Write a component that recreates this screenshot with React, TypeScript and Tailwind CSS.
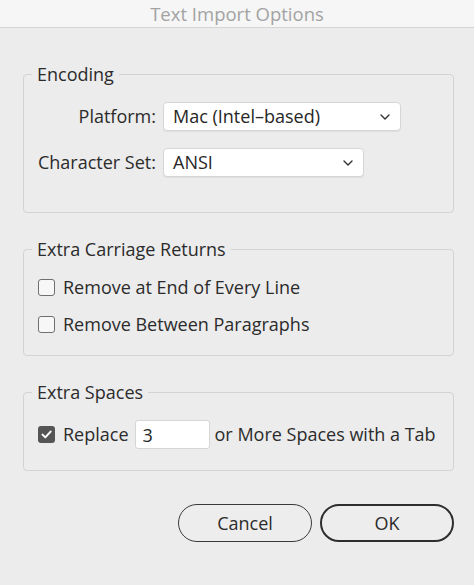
import { useState } from "react";

const FONT = "font-['Open_Sans',_'Noto_Sans',_sans-serif]";

const Chevron = () => (
  <svg width="10" height="6" viewBox="0 0 10 6" fill="none" className="shrink-0">
    <path d="M1 1l4 4 4-4" stroke="#333" strokeWidth="1.4" strokeLinecap="round" strokeLinejoin="round" />
  </svg>
);

const Select = ({ value, width }: { value: string; width: string }) => (
  <div
    className={`${width} flex h-[29px] items-center justify-between rounded-[4px] border border-[#d6d6d6] bg-white pl-[9px] pr-[10px] shadow-[0_1px_1px_rgba(0,0,0,0.06)]`}
  >
    <span className="text-[18px] text-[#262626]">{value}</span>
    <Chevron />
  </div>
);

const Checkbox = ({ checked, onChange }: { checked: boolean; onChange: () => void }) => (
  <button
    type="button"
    onClick={onChange}
    className={
      checked
        ? "flex h-[17px] w-[17px] shrink-0 items-center justify-center rounded-[3px] bg-[#555]"
        : "h-[17px] w-[17px] shrink-0 rounded-[3px] border border-[#6f6f6f] bg-[#f7f7f7]"
    }
  >
    {checked ? (
      <svg width="11" height="9" viewBox="0 0 11 9" fill="none">
        <path d="M1.5 4.6l2.8 2.8L9.6 1.6" stroke="#fff" strokeWidth="2" strokeLinecap="round" strokeLinejoin="round" />
      </svg>
    ) : null}
  </button>
);

const Group = ({ title, className, children }: { title: string; className: string; children: React.ReactNode }) => (
  <fieldset className={`mx-[20px] ml-[23px] rounded-[4px] border border-[#d3d3d3] ${className}`}>
    <legend className="ml-[8px] px-[5px] text-[18px] leading-[22px] text-[#2b2b2b]">{title}</legend>
    {children}
  </fieldset>
);

export default function App() {
  const [endOfLine, setEndOfLine] = useState(false);
  const [betweenParagraphs, setBetweenParagraphs] = useState(false);
  const [replace, setReplace] = useState(true);

  return (
    <div className={`${FONT} flex h-[585px] w-[474px] flex-col bg-[#ececec] text-[#2b2b2b]`}>
      <div className="flex h-[28px] shrink-0 items-center justify-center border-b border-[#d5d5d5] bg-[#f6f6f6]">
        <span className="text-[18.5px] text-[#a3a3a3]">Text Import Options</span>
      </div>

      <Group title="Encoding" className="mt-[35px]">
        <div className="grid grid-cols-[119px_auto] items-center gap-x-[7px] gap-y-[17px] pb-[35px] pl-[13px] pt-[17px]">
          <span className="whitespace-nowrap text-right text-[18px]">Platform:</span>
          <Select value="Mac (Intel–based)" width="w-[238px]" />
          <span className="whitespace-nowrap text-right text-[18px]">Character Set:</span>
          <Select value="ANSI" width="w-[201px]" />
        </div>
      </Group>

      <Group title="Extra Carriage Returns" className="mt-[25px]">
        <div className="flex flex-col gap-[13px] pb-[19px] pl-[14px] pt-[15px]">
          <label className="flex h-[24px] items-center gap-[8px] text-[18px]">
            <Checkbox checked={endOfLine} onChange={() => setEndOfLine(!endOfLine)} />
            Remove at End of Every Line
          </label>
          <label className="flex h-[24px] items-center gap-[8px] text-[18px]">
            <Checkbox checked={betweenParagraphs} onChange={() => setBetweenParagraphs(!betweenParagraphs)} />
            Remove Between Paragraphs
          </label>
        </div>
      </Group>

      <Group title="Extra Spaces" className="mt-[25px]">
        <div className="flex items-center pb-[21px] pl-[14px] pt-[17px] text-[18px]">
          <Checkbox checked={replace} onChange={() => setReplace(!replace)} />
          <span className="ml-[8px]">Replace</span>
          <input
            defaultValue="3"
            className="ml-[6px] h-[29px] w-[75px] rounded-[3px] border border-[#d6d6d6] bg-white pl-[7px] text-[18px] text-[#262626] outline-none"
          />
          <span className="ml-[5px] whitespace-nowrap">or More Spaces with a Tab</span>
        </div>
      </Group>

      <div className="mr-[20px] mt-[33px] flex justify-end gap-[8px]">
        <button
          type="button"
          className="h-[38px] w-[134px] rounded-full border border-[#3a3a3a] bg-[#ededed] text-[18px] text-[#2b2b2b]"
        >
          Cancel
        </button>
        <button
          type="button"
          className="h-[38px] w-[134px] rounded-full border-2 border-[#2e2e2e] bg-[#ededed] text-[18px] text-[#2b2b2b]"
        >
          OK
        </button>
      </div>
    </div>
  );
}
